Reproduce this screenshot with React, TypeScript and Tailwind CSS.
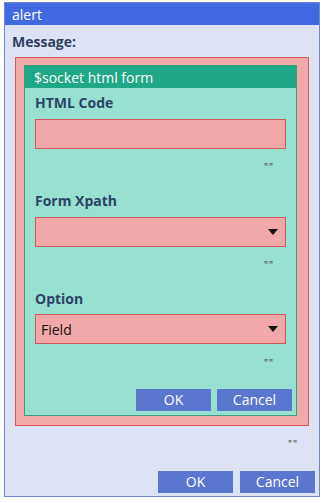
import React from "react";

const font = { fontFamily: '"Open Sans", "Noto Sans", sans-serif' };

function Quote({ className = "" }: { className?: string }) {
  return (
    <div className={`flex justify-end text-[10px] leading-[14px] tracking-[1px] text-[#333] ${className}`}>
      ""
    </div>
  );
}

function Caret() {
  return (
    <svg width="10" height="6" viewBox="0 0 10 6" className="shrink-0">
      <path d="M0 0 H10 L5 6 Z" fill="#111" />
    </svg>
  );
}

function FakeSelect({ value }: { value?: string }) {
  return (
    <div className="mx-[10px] flex h-[30px] items-center justify-between border border-[#d0595c] bg-[#f2a8aa] pl-[5px] pr-[7px]">
      <span className="text-[14px] text-[#111]">{value}</span>
      <Caret />
    </div>
  );
}

function Btn({ children }: { children: React.ReactNode }) {
  return (
    <button className="flex h-[22px] w-[75px] items-center justify-center bg-[#5a77cf] text-[14px] leading-none text-white">
      {children}
    </button>
  );
}

export default function App() {
  return (
    <div className="min-h-[503px] w-[325px] bg-white pl-[4px] pt-[2px]" style={font}>
      <div className="flex h-[495px] w-[316px] flex-col border border-[#6f88d6] bg-[#dde2f5]">
        <div className="flex h-[22px] items-center bg-[#4169e1] px-[7px] text-[14px] text-white">
          alert
        </div>

        <div className="mt-[8px] px-[7px] text-[14px] font-bold leading-[18px] text-[#2f3f62]">
          Message:
        </div>

        <div className="ml-[10px] mt-[6px] w-[294px] border border-[#d9585a] bg-[#f2a9aa] pb-[9px] pl-[8px] pr-[11px] pt-[7px]">
          <div className="border border-[#3d9c80] bg-[#98e1d0]">
            <div className="flex h-[22px] items-center bg-[#1ea886] px-[9px] text-[14px] text-white">
              $socket html form
            </div>

            <div className="mt-[6px] px-[10px] text-[14px] font-bold leading-[18px] text-[#2b4466]">
              HTML Code
            </div>
            <div className="mx-[10px] mt-[7px] h-[30px] border border-[#d0595c] bg-[#f2a8aa]" />
            <Quote className="mt-[11px] pr-[22px]" />

            <div className="mt-[18px] px-[10px] text-[14px] font-bold leading-[18px] text-[#2b4466]">
              Form Xpath
            </div>
            <div className="mt-[7px]">
              <FakeSelect />
            </div>
            <Quote className="mt-[11px] pr-[22px]" />

            <div className="mt-[18px] px-[10px] text-[14px] font-bold leading-[18px] text-[#2b4466]">
              Option
            </div>
            <div className="mt-[6px]">
              <FakeSelect value="Field" />
            </div>
            <Quote className="mt-[12px] pr-[22px]" />

            <div className="mt-[19px] flex justify-end gap-[6px] pb-[4px] pr-[4px]">
              <Btn>OK</Btn>
              <Btn>Cancel</Btn>
            </div>
          </div>
        </div>

        <Quote className="mt-[11px] pr-[21px]" />

        <div className="mt-[20px] flex justify-end gap-[7px] pr-[4px]">
          <Btn>OK</Btn>
          <Btn>Cancel</Btn>
        </div>
      </div>
    </div>
  );
}
